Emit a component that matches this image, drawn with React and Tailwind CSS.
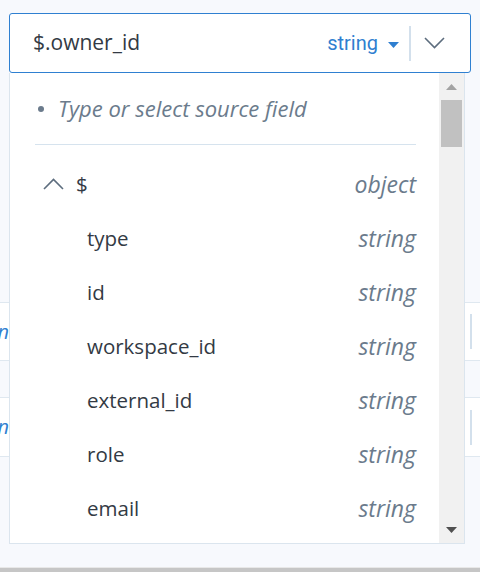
import React from "react";

const items = ["type", "id", "workspace_id", "external_id", "role", "email"];

function BgRow({ h }) {
  return (
    <div className={`${h} bg-white border-b border-[#dfe8f0] flex items-center`}>
      <div className="w-[9px] overflow-hidden flex justify-end shrink-0">
        <span className="whitespace-nowrap italic text-[20px] text-[#2f7fd0] font-['Open_Sans',sans-serif]">n</span>
      </div>
      <div className="flex-1" />
      <div className="w-[2px] h-[35px] bg-[#d3e0ec] mr-[8px]" />
    </div>
  );
}

export default function App() {
  return (
    <div className="relative w-[480px] h-[572px] overflow-hidden bg-[#f7f9fd] font-['Open_Sans',sans-serif] flex flex-col">
      {/* input */}
      <div className="pt-[13px] px-[9px]">
        <div className="h-[60px] border border-[#2f80d1] rounded-[3px] bg-white flex items-center pl-[23px] pr-[25px]">
          <span className="text-[21px] text-[#333a44] flex-1">$.owner_id</span>
          <span className="text-[20px] text-[#2f7fd0] font-['Roboto',sans-serif]">string</span>
          <svg width="11" height="6" viewBox="0 0 11 6" className="ml-[10px] mt-[3px]">
            <path d="M0 0 L11 0 L5.5 6 Z" fill="#2f7fd0" />
          </svg>
          <div className="w-[2px] h-[35px] bg-[#d3e0ec] ml-[10px] mr-[13px]" />
          <svg width="21" height="12" viewBox="0 0 21 12">
            <path d="M1 1 L10.5 10.5 L20 1" fill="none" stroke="#5d6d7e" strokeWidth="1.6" />
          </svg>
        </div>
      </div>

      {/* background content */}
      <div className="h-[230px] border-b border-[#dfe8f0]" />
      <BgRow h="h-[58px]" />
      <div className="h-[37px] border-b border-[#dfe8f0]" />
      <BgRow h="h-[59px]" />
      <div className="flex-1" />
      <div className="h-[1px] bg-[#e8e8e8]" />
      <div className="h-[4px] bg-[#c6c6c6]" />

      {/* dropdown panel */}
      <div className="absolute left-[9px] top-[73px] w-[456px] h-[471px] bg-white border border-t-0 border-[#dbe5ee] flex">
        <div className="flex-1 flex flex-col">
          <div className="h-[71px] flex items-center pl-[28px]">
            <span className="w-[6px] h-[6px] rounded-full bg-[#6b7b8c] mr-[14px] mt-[1px]" />
            <span className="italic text-[22px] text-[#6b7b8c]">Type or select source field</span>
          </div>
          <div className="h-[1px] bg-[#d6e3ee] ml-[25px] mr-[23px]" />
          <div className="pt-[12px] flex flex-col">
            <div className="h-[54px] flex items-center pl-[33px] pr-[23px]">
              <svg width="21" height="12" viewBox="0 0 21 12" className="mr-[12px]">
                <path d="M1 11 L10.5 1.5 L20 11" fill="none" stroke="#5d6d7e" strokeWidth="1.6" />
              </svg>
              <span className="text-[20.5px] text-[#333a44] flex-1">$</span>
              <span className="italic text-[23px] text-[#6b7b8c]">object</span>
            </div>
            {items.map((it) => (
              <div key={it} className="h-[54px] flex items-center pl-[77px] pr-[23px]">
                <span className="text-[20.5px] text-[#333a44] flex-1">{it}</span>
                <span className="italic text-[23px] text-[#6b7b8c]">string</span>
              </div>
            ))}
          </div>
        </div>
        {/* scrollbar */}
        <div className="w-[25px] bg-[#f1f1f1] flex flex-col items-center">
          <div className="h-[27px] flex items-center justify-center">
            <svg width="11" height="6" viewBox="0 0 11 6">
              <path d="M0 6 L11 6 L5.5 0 Z" fill="#a3a3a3" />
            </svg>
          </div>
          <div className="w-[21px] h-[47px] bg-[#c1c1c1]" />
          <div className="flex-1" />
          <div className="h-[27px] flex items-center justify-center">
            <svg width="11" height="6" viewBox="0 0 11 6">
              <path d="M0 0 L11 0 L5.5 6 Z" fill="#505050" />
            </svg>
          </div>
        </div>
      </div>
    </div>
  );
}
